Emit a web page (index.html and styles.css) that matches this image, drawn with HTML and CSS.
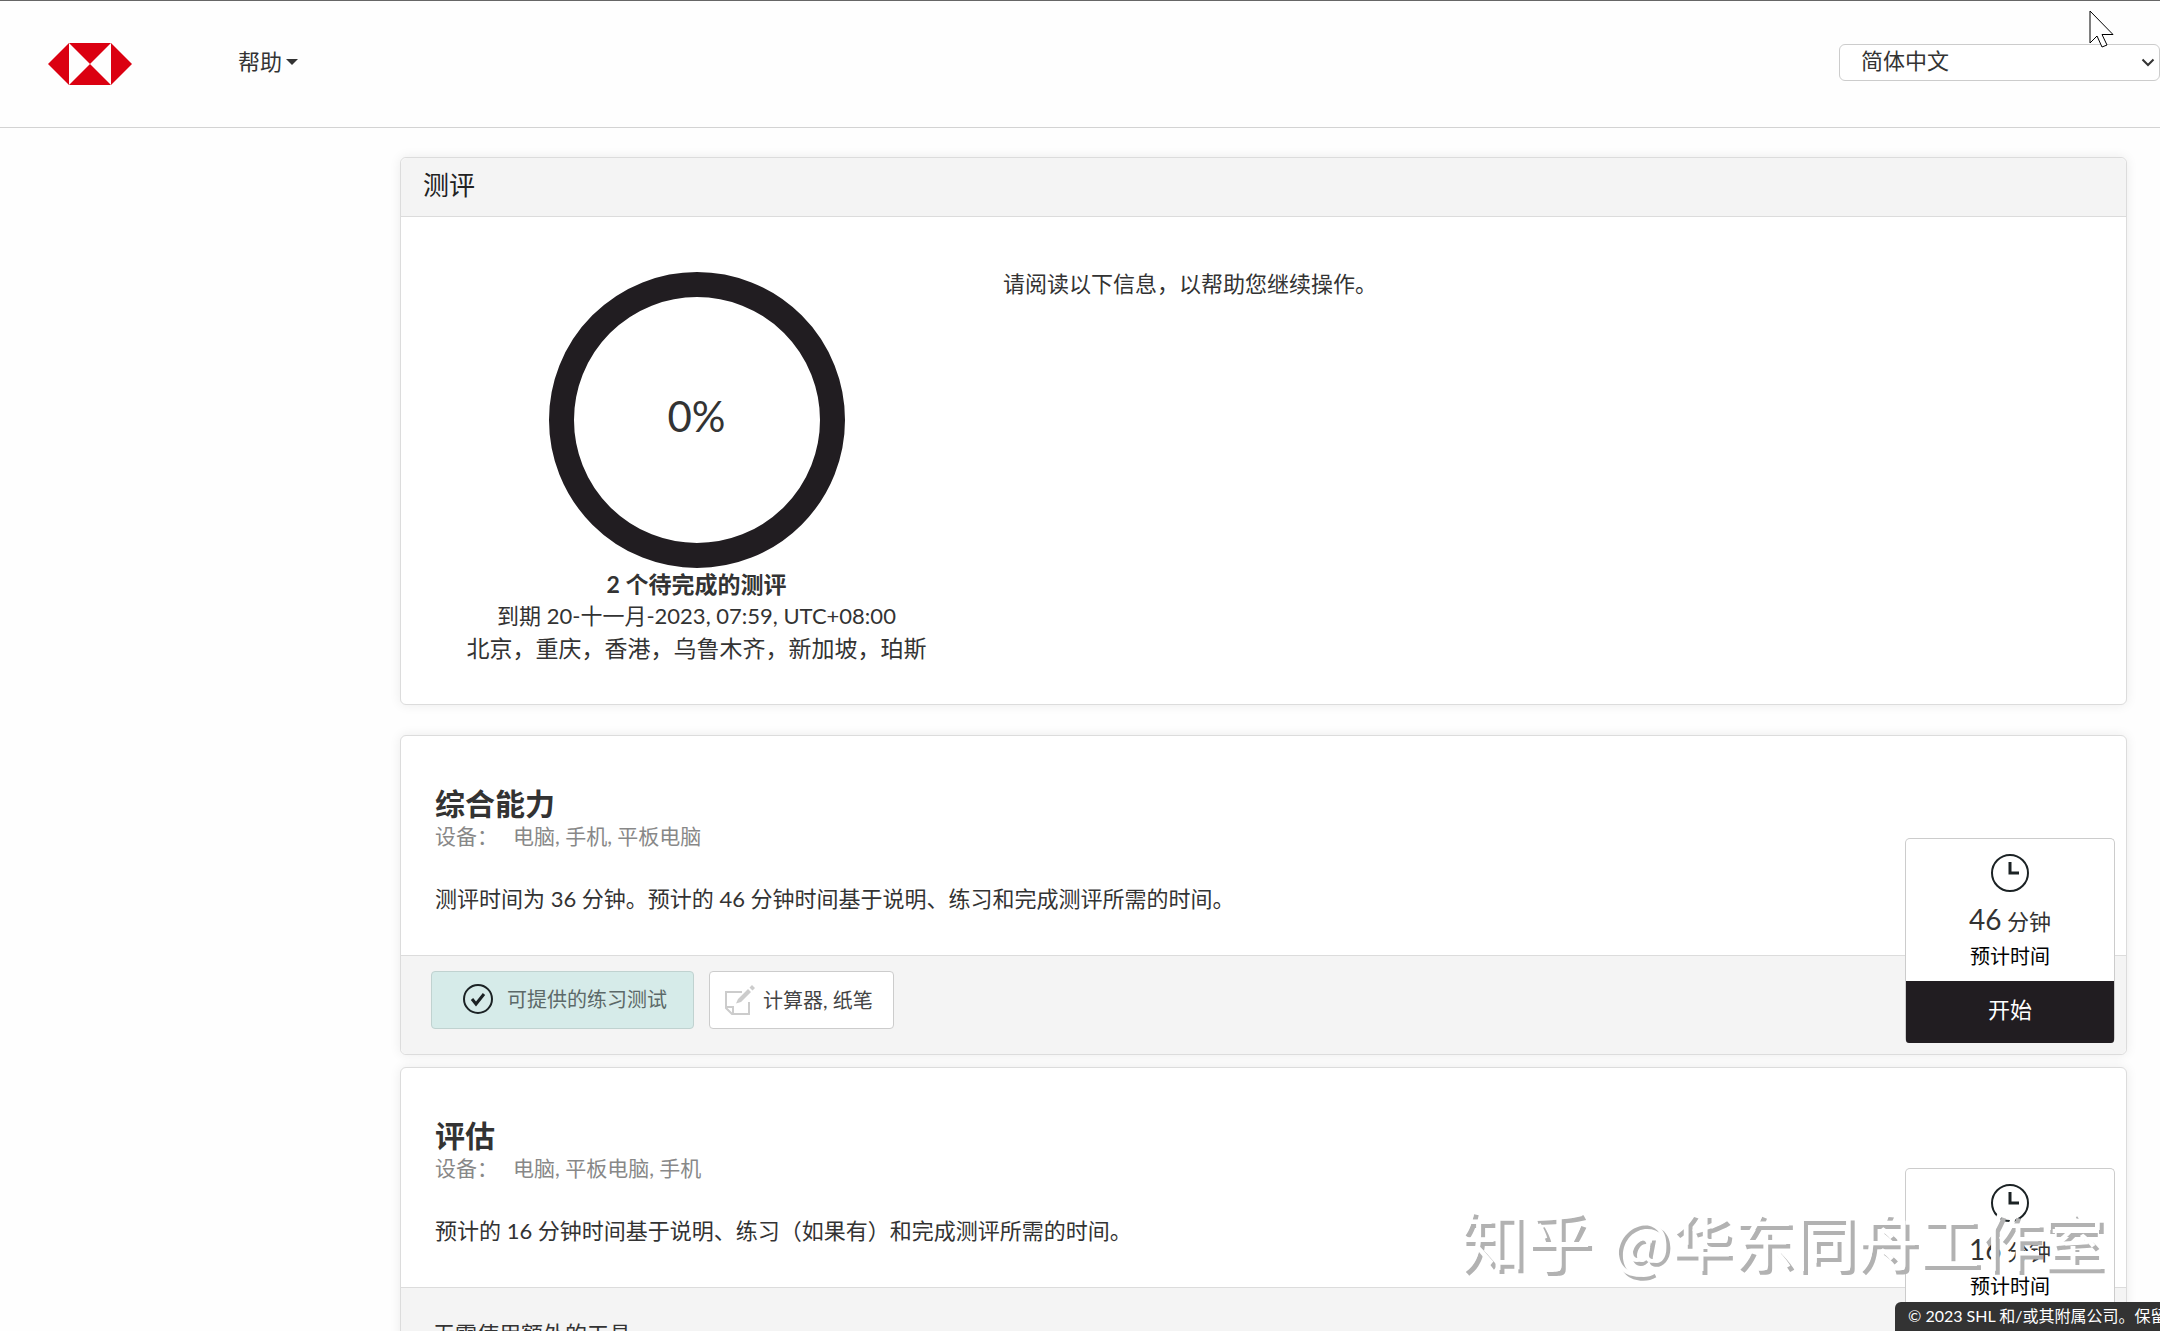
FILE: index.html
```html
<!DOCTYPE html>
<html lang="zh-CN">
<head>
<meta charset="utf-8">
<title>测评</title>
<link rel="stylesheet" href="styles.css">
</head>
<body>
<header class="topbar">
  <a class="logo" href="#" aria-label="HSBC">
    <svg width="84" height="42" viewBox="0 0 84 42" aria-hidden="true">
      <path fill="#db0011" d="M0 21 21 0v42zM84 21 63 0v42zM21 0h42L42 21zM21 42h42L42 21z"/>
    </svg>
  </a>
  <button class="help" type="button">帮助<span class="caret"></span></button>
  <div class="language">
    <select class="language-select" aria-label="语言">
      <option>简体中文</option>
    </select>
    <svg class="chevron" width="14" height="9" viewBox="0 0 14 9" aria-hidden="true">
      <path d="M1.5 1.5 7 7l5.500-5.500" fill="none" stroke="#333" stroke-width="2"/>
    </svg>
  </div>
</header>

<main class="content">
  <section class="card overview">
    <h1 class="card-head">测评</h1>
    <div class="overview-body">
      <div class="progress">
        <div class="ring">0%</div>
        <strong class="pending">2 个待完成的测评</strong>
        <span>到期 20-十一月-2023, 07:59, UTC+08:00</span>
        <span class="zones">北京，重庆，香港，乌鲁木齐，新加坡，珀斯</span>
      </div>
      <p class="intro">请阅读以下信息，以帮助您继续操作。</p>
    </div>
  </section>

  <section class="card">
    <div class="task-body">
      <h2 class="task-title">综合能力</h2>
      <p class="devices"><span>设备：</span><span>电脑, 手机, 平板电脑</span></p>
      <p class="task-text">测评时间为 36 分钟。预计的 46 分钟时间基于说明、练习和完成测评所需的时间。</p>
    </div>
    <div class="task-foot">
      <a class="chip practice" href="#">
        <svg width="32" height="32" viewBox="0 0 32 32" fill="none" stroke="#1b2224" aria-hidden="true">
          <circle cx="16" cy="16" r="14" stroke-width="2"/>
          <path d="m10 16 4 5 8-10" stroke-width="3"/>
        </svg>
        <span>可提供的练习测试</span>
      </a>
      <div class="chip tools">
        <svg width="30" height="30" viewBox="0 0 30 30" fill="none" stroke="#ccc" stroke-width="2" aria-hidden="true">
          <path d="M17 7H1v16l6 6h17V17M1 22h7v7"/>
          <path d="M11 18.500 13 14 23 4l3 3-10 10zM24.500 2.500 27 0l3 3-2.500 2.500z" fill="#ccc" stroke="none"/>
        </svg>
        <span>计算器, 纸笔</span>
      </div>
    </div>
    <aside class="timing">
      <svg class="clock" width="40" height="40" viewBox="0 0 40 40" fill="none" stroke="#1b2224" aria-hidden="true">
        <circle cx="20" cy="20" r="18" stroke-width="2"/>
        <path d="M20 9v11h9" stroke-width="3"/>
      </svg>
      <span class="duration"><b>46</b> 分钟</span>
      <span class="caption">预计时间</span>
      <button class="start" type="button">开始</button>
    </aside>
  </section>

  <section class="card">
    <div class="task-body">
      <h2 class="task-title">评估</h2>
      <p class="devices"><span>设备：</span><span>电脑, 平板电脑, 手机</span></p>
      <p class="task-text">预计的 16 分钟时间基于说明、练习（如果有）和完成测评所需的时间。</p>
    </div>
    <div class="task-foot plain">无需使用额外的工具</div>
    <aside class="timing">
      <svg class="clock" width="40" height="40" viewBox="0 0 40 40" fill="none" stroke="#1b2224" aria-hidden="true">
        <circle cx="20" cy="20" r="18" stroke-width="2"/>
        <path d="M20 9v11h9" stroke-width="3"/>
      </svg>
      <span class="duration"><b>16</b> 分钟</span>
      <span class="caption">预计时间</span>
      <button class="start" type="button">开始</button>
    </aside>
  </section>
</main>

<div class="watermark"><span class="watermark-site">知乎</span> @华东同舟工作室</div>
<footer class="copyright">© 2023 SHL 和/或其附属公司。保留所有权利。</footer>
<svg class="pointer" width="26" height="40" viewBox="0 0 26 40" aria-hidden="true">
  <path d="M1 1v32l7-7 5 11 5-2-5-10.500h11z" fill="#fff" stroke="#000" stroke-width="1"/>
</svg>
</body>
</html>
```
FILE: styles.css
```css
* {
  box-sizing: border-box;
}

body {
  margin: 0;
  height: 100vh;
  overflow: hidden;
  border-top: 1px solid #666;
  background: #fefefe;
  color: #333;
  font: 22px/32px Lato, "Noto Sans CJK SC", sans-serif;
}

h1, h2, p {
  margin: 0;
}

button, select {
  font: inherit;
  color: inherit;
}

.topbar {
  display: flex;
  align-items: center;
  height: 127px;
  padding: 0 0 4px 48px;
  border-bottom: 1px solid #d3d3d3;
}

.logo {
  display: flex;
  margin-right: 106px;
  padding-top: 4px;
}

.help {
  display: flex;
  align-items: center;
  gap: 4px;
  padding: 0;
  border: 0;
  background: none;
}

.caret {
  border: 6px solid transparent;
  border-top-color: #333;
  border-bottom: 0;
}

.language {
  position: relative;
  width: 321px;
  margin-left: auto;
}

.language-select {
  display: block;
  width: 100%;
  height: 37px;
  padding: 0 21px 2px;
  border: 1px solid #ccc;
  border-radius: 6px;
  background: #fff;
  line-height: 32px;
  appearance: none;
}

.chevron {
  position: absolute;
  right: 5px;
  top: 14px;
}

.content {
  padding: 29px 33px 0 400px;
}

.card {
  position: relative;
  margin-bottom: 12px;
  border: 1px solid #dcdcdc;
  border-radius: 6px;
  background: #fff;
  box-shadow: 0 0 12px rgba(0, 0, 0, 0.08);
}

.overview {
  margin-bottom: 30px;
}

.card-head {
  padding: 11px 22px 15px;
  border-bottom: 1px solid #dcdcdc;
  border-radius: 6px 6px 0 0;
  background: #f4f4f4;
  color: #222;
  font-size: 26px;
  font-weight: 400;
  line-height: 32px;
}

.overview-body {
  display: grid;
  grid-template-columns: 1fr 2fr;
  padding: 55px 12px 40px;
}

.progress {
  display: flex;
  flex-direction: column;
  align-items: center;
}

.ring {
  display: grid;
  place-items: center;
  width: 296px;
  height: 296px;
  padding-bottom: 8px;
  border: 25px solid #211d21;
  border-radius: 50%;
  font-size: 42px;
}

.pending,
.zones {
  font-size: 23px;
}

.intro {
  padding: 0 23px;
  line-height: 24px;
}

.task-body {
  padding: 48px 34px 40px;
}

.task-title {
  font-size: 30px;
  font-weight: 700;
  line-height: 38px;
}

.devices {
  display: flex;
  gap: 15px;
  margin-bottom: 33px;
  color: #888;
  font-size: 21px;
  line-height: 28px;
}

.task-foot {
  display: flex;
  gap: 15px;
  height: 99px;
  padding: 15px 30px 25px;
  border-top: 1px solid #dcdcdc;
  border-radius: 0 0 6px 6px;
  background: #f4f4f4;
}

.task-foot.plain {
  height: 97px;
  padding: 30px 32px;
}

.chip {
  display: flex;
  align-items: center;
  padding: 0 15px;
  gap: 8px;
  border: 1px solid #ccc;
  border-radius: 4px;
  background: #fff;
  font-size: 20px;
}

.tools {
  padding-right: 20px;
  color: #444;
}

.practice {
  padding: 0 26px 2px 30px;
  gap: 13px;
  border-color: #c0d2d0;
  background: #d6ebe9;
  color: #5c6968;
  text-decoration: none;
}

.timing {
  position: absolute;
  right: 11px;
  bottom: 11px;
  display: flex;
  flex-direction: column;
  align-items: center;
  width: 210px;
  height: 205px;
  padding-top: 14px;
  border: 1px solid #ccc;
  border-bottom: 0;
  border-radius: 5px;
  background: #fff;
}

.duration {
  margin-top: 8px;
  line-height: 36px;
}

.duration b {
  font-size: 28px;
  font-weight: 400;
}

.caption {
  color: #000;
  font-size: 20px;
}

.start {
  width: 100%;
  height: 62px;
  margin-top: auto;
  padding: 0 0 4px;
  border: 0;
  border-radius: 0 0 3px 3px;
  background: #211d21;
  color: #fff;
}

.watermark {
  position: fixed;
  right: 56px;
  bottom: 52px;
  color: #fff;
  font-family: "Noto Sans CJK SC", sans-serif;
  font-size: 62px;
  line-height: 80px;
  text-shadow: 4px 4px 0 #b2b2b2;
  white-space: nowrap;
}

.watermark-site {
  margin-right: 6px;
  font-size: 66px;
}

.copyright {
  position: fixed;
  right: 0;
  bottom: 0;
  width: 265px;
  height: 29px;
  padding-left: 13px;
  overflow: hidden;
  border-radius: 6px 0 0 0;
  background: #333;
  color: #fff;
  font-size: 16px;
  line-height: 28px;
  white-space: nowrap;
}

.pointer {
  position: fixed;
  top: 10px;
  right: 45px;
}
```
